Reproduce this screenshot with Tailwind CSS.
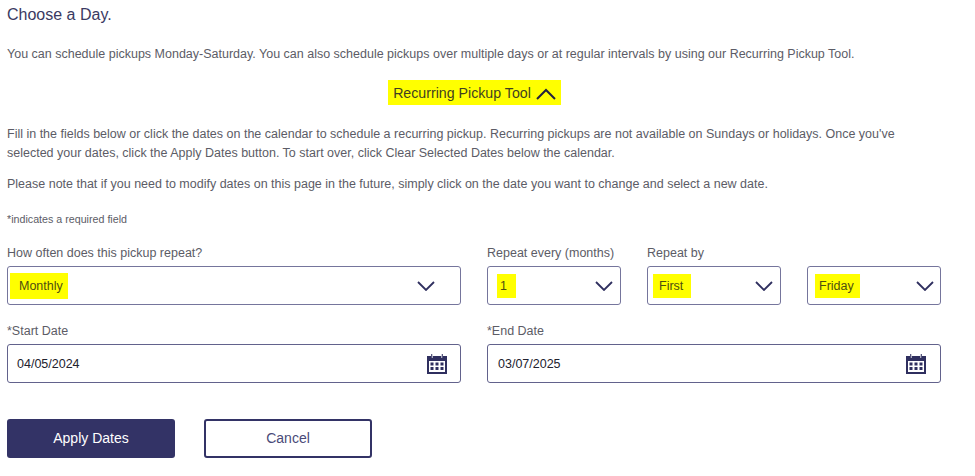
<!DOCTYPE html>
<html>
<head>
	<title>Choose a Day</title>
	<meta charset="UTF-8" />
	<script src="https://cdn.jsdelivr.net/npm/@tailwindcss/browser@4"></script>
</head>
<body class="bg-white font-['Liberation_Sans',Arial,sans-serif] text-[12.5px] text-[#5c5c66] overflow-hidden">
	<div class="w-[975px] h-[476px] px-[7px]">

		<h1 class="text-[16px] leading-[18px] pt-[6px] text-[#3a3a62]">Choose a Day.</h1>

		<p class="mt-[21px] leading-[19px]">You can schedule pickups Monday-Saturday. You can also schedule pickups over multiple days or at regular intervals by using our Recurring Pickup Tool.</p>

		<div class="mt-[16px] flex justify-center w-[935px]">
			<div class="h-[25px] w-[173px] bg-[#ffff00] flex items-center justify-center gap-[5px] pt-[3px] text-[14.2px] text-[#3f3f20]">
				<span>Recurring Pickup Tool</span>
				<svg width="20" height="12" viewBox="0 0 20 12" fill="none" stroke="#23233f" stroke-width="2"><path d="M1 11 L10 2 L19 11" /></svg>
			</div>
		</div>

		<p class="mt-[20px] leading-[19px] w-[900px]">Fill in the fields below or click the dates on the calendar to schedule a recurring pickup. Recurring pickups are not available on Sundays or holidays. Once you've selected your dates, click the Apply Dates button. To start over, click Clear Selected Dates below the calendar.</p>

		<p class="mt-[12px] leading-[19px]">Please note that if you need to modify dates on this page in the future, simply click on the date you want to change and select a new date.</p>

		<p class="mt-[19px] text-[10.7px] leading-[12px]">*indicates a required field</p>

		<div class="mt-[20px] flex gap-[26px] w-[934px]">
			<div class="w-[454px]">
				<label class="block leading-[16px] mb-[5px]">How often does this pickup repeat?</label>
				<div class="h-[39px] border-[1.5px] border-[#75759c] rounded-[3px] flex items-center justify-between pl-[2px] pr-[25px]">
					<span class="bg-[#ffff00] text-[#4f4f10] w-[58px] h-[26px] pl-[9px] pt-[2px] flex items-center">Monthly</span>
					<svg width="18" height="10" viewBox="0 0 18 10" fill="none" stroke="#2f2f5f" stroke-width="1.8"><path d="M1 1 L9 9 L17 1" /></svg>
				</div>
			</div>
			<div class="w-[134px]">
				<label class="block leading-[16px] mb-[5px]">Repeat every (months)</label>
				<div class="h-[39px] border-[1.5px] border-[#75759c] rounded-[3px] flex items-center justify-between pl-[9px] pr-[7px]">
					<span class="bg-[#ffff00] text-[#4f4f10] w-[19px] h-[24px] pl-[3px] pt-[2px] flex items-center">1</span>
					<svg width="18" height="10" viewBox="0 0 18 10" fill="none" stroke="#2f2f5f" stroke-width="1.8"><path d="M1 1 L9 9 L17 1" /></svg>
				</div>
			</div>
			<div class="w-[134px]">
				<label class="block leading-[16px] mb-[5px]">Repeat by</label>
				<div class="h-[39px] border-[1.5px] border-[#75759c] rounded-[3px] flex items-center justify-between pl-[5px] pr-[7px]">
					<span class="bg-[#ffff00] text-[#4f4f10] w-[38px] h-[24px] pl-[6px] pt-[2px] flex items-center">First</span>
					<svg width="18" height="10" viewBox="0 0 18 10" fill="none" stroke="#2f2f5f" stroke-width="1.8"><path d="M1 1 L9 9 L17 1" /></svg>
				</div>
			</div>
			<div class="w-[134px]">
				<label class="block leading-[16px] mb-[5px] invisible">Day</label>
				<div class="h-[39px] border-[1.5px] border-[#75759c] rounded-[3px] flex items-center justify-between pl-[7px] pr-[6px]">
					<span class="bg-[#ffff00] text-[#4f4f10] w-[45px] h-[24px] pl-[4px] pt-[2px] flex items-center">Friday</span>
					<svg width="18" height="10" viewBox="0 0 18 10" fill="none" stroke="#2f2f5f" stroke-width="1.8"><path d="M1 1 L9 9 L17 1" /></svg>
				</div>
			</div>
		</div>

		<div class="mt-[18px] flex gap-[26px] w-[934px]">
			<div class="w-[454px]">
				<label class="block leading-[16px] mb-[5px]">*Start Date</label>
				<div class="h-[39px] border-[1.5px] border-[#62628c] rounded-[3px] flex items-center justify-between pl-[9px] pr-[12px] text-[#22222e]">
					<span class="pt-[2px]">04/05/2024</span>
					<svg width="22" height="22" viewBox="0 0 22 22"><path fill="#2f2f5f" d="M1 3h4V1h1.6V3h8.8V1H17V3h4v18H1z" /><path fill="#fff" d="M5.8 0h.8v5h-.8zM15.4 0h.8v5h-.8z" /><path fill="#fff" d="M3 8h16v11H3z" /><path fill="#2f2f5f" d="M4.5 9.5h3v3h-3zM9.5 9.5h3v3h-3zM14.5 9.5h3v3h-3zM4.5 14h3v3h-3zM9.5 14h3v3h-3zM14.5 14h3v3h-3z" /></svg>
				</div>
			</div>
			<div class="w-[454px]">
				<label class="block leading-[16px] mb-[5px]">*End Date</label>
				<div class="h-[39px] border-[1.5px] border-[#62628c] rounded-[3px] flex items-center justify-between pl-[10px] pr-[13px] text-[#22222e]">
					<span class="pt-[2px]">03/07/2025</span>
					<svg width="22" height="22" viewBox="0 0 22 22"><path fill="#2f2f5f" d="M1 3h4V1h1.6V3h8.8V1H17V3h4v18H1z" /><path fill="#fff" d="M5.8 0h.8v5h-.8zM15.4 0h.8v5h-.8z" /><path fill="#fff" d="M3 8h16v11H3z" /><path fill="#2f2f5f" d="M4.5 9.5h3v3h-3zM9.5 9.5h3v3h-3zM14.5 9.5h3v3h-3zM4.5 14h3v3h-3zM9.5 14h3v3h-3zM14.5 14h3v3h-3z" /></svg>
				</div>
			</div>
		</div>

		<div class="mt-[36px] flex gap-[29px]">
			<button class="w-[168px] h-[39px] bg-[#333366] text-white text-[14px] rounded-[3px]">Apply Dates</button>
			<button class="w-[168px] h-[39px] border-2 border-[#333366] bg-white text-[#4a4a78] text-[14px] rounded-[3px]">Cancel</button>
		</div>

	</div>
</body>
</html>
